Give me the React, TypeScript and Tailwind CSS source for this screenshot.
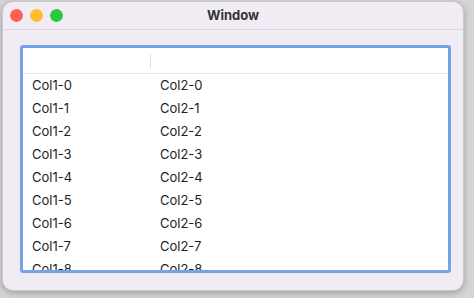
const ROWS = Array.from({ length: 9 }, (_, i) => i);

export default function App() {
  return (
    <div className="w-[474px] h-[298px] bg-[#d4d3d6] overflow-hidden relative" style={{ fontFamily: "Inter, 'Liberation Sans', sans-serif" }}>
      <div className="absolute left-[2px] top-[1px] w-[462px] h-[290px] rounded-[11px] bg-[#f1ecf4] border border-[#cbc6ce] shadow-[0_2px_6px_rgba(0,0,0,0.25)] overflow-hidden flex flex-col">
        {/* title bar */}
        <div className="h-[28px] flex items-center relative border-b border-[#dcd6df] shrink-0">
          <div className="flex items-center gap-[7px] pl-[7px]">
            <span className="w-[13px] h-[13px] rounded-full bg-[#fe5f57]" />
            <span className="w-[13px] h-[13px] rounded-full bg-[#febc2e]" />
            <span className="w-[13px] h-[13px] rounded-full bg-[#29c840]" />
          </div>
          <div className="absolute inset-0 flex items-center justify-center text-[13px] font-bold text-[#333335]">Window</div>
        </div>

        {/* table */}
        <div className="ml-[17px] mt-[15px] w-[431px] h-[228px] border-[3px] border-[#76a2ea] rounded-[3px] bg-white overflow-hidden">
          <div className="h-[26px] flex items-center border-b border-[#e6e6e6]">
            <div className="w-[128px] h-[14px] border-r border-[#dedede]" />
          </div>
          {ROWS.map(i => (
            <div key={i} className="h-[23px] flex items-center text-[13px] text-[#1e1e1e]">
              <span className="w-[128px] pl-[9px]">Col1-{i}</span>
              <span className="pl-[9px]">Col2-{i}</span>
            </div>
          ))}
        </div>
      </div>
    </div>
  );
}
